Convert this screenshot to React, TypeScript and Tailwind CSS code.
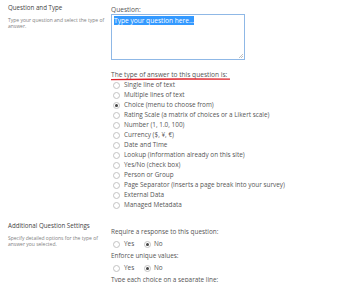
import React from 'react';

const answerTypes = [
  'Single line of text',
  'Multiple lines of text',
  'Choice (menu to choose from)',
  'Rating Scale (a matrix of choices or a Likert scale)',
  'Number (1, 1.0, 100)',
  'Currency ($, ¥, €)',
  'Date and Time',
  'Lookup (information already on this site)',
  'Yes/No (check box)',
  'Person or Group',
  'Page Separator (inserts a page break into your survey)',
  'External Data',
  'Managed Metadata',
];

const Radio: React.FC<{ checked?: boolean }> = ({ checked }) => (
  <span className="flex h-[7px] w-[7px] shrink-0 items-center justify-center rounded-full border border-[#c2c2c2] bg-white">
    {checked && <span className="h-[3px] w-[3px] rounded-full bg-[#444]" />}
  </span>
);

const YesNo: React.FC = () => (
  <div className="flex h-[12px] items-center pl-[2px]">
    <Radio />
    <span className="ml-[4px] w-[20px]">Yes</span>
    <Radio checked />
    <span className="ml-[3px]">No</span>
  </div>
);

export default function App() {
  return (
    <div
      className="h-[282px] w-[359px] overflow-hidden bg-white text-[#555]"
      style={{ fontFamily: '"Open Sans", "Noto Sans", sans-serif' }}
    >
      {/* Question and Type */}
      <div className="flex">
        <div className="w-[111px] shrink-0 pl-[8px] pt-[4px]">
          <div className="text-[6.2px] leading-[8px] text-[#444]">Question and Type</div>
          <div className="mt-[5px] w-[98px] text-[5px] leading-[6px] text-[#808080]">
            Type your question and select the type of answer.
          </div>
        </div>
        <div className="pt-[6px] text-[6.6px]">
          <div className="leading-[8px]">Question:</div>
          <div className="relative h-[46px] w-[134px] border border-[#8fb8e6] px-[2px] pt-[1px]">
            <span className="bg-[#3399ff] leading-[7px] text-white">Type your question here...</span>
            <svg className="absolute bottom-[1px] right-[1px]" width="4" height="4" viewBox="0 0 4 4">
              <path d="M4 0 L0 4 M4 2 L2 4" stroke="#999" strokeWidth="0.6" />
            </svg>
          </div>
          <div className="relative mt-[10px] inline-block leading-[10px]">
            The type of answer to this question is:
            <svg className="absolute left-0 top-[8px]" width="120" height="3" viewBox="0 0 120 3">
              <path d="M0 1.6 Q60 0.6 119 1.2" stroke="#e0242b" strokeWidth="1.3" fill="none" />
            </svg>
          </div>
          <div className="text-[6.4px]">
            {answerTypes.map(t => (
              <div key={t} className="flex h-[10px] items-center pl-[2px]">
                <Radio checked={t === 'Choice (menu to choose from)'} />
                <span className="ml-[4px] whitespace-nowrap">{t}</span>
              </div>
            ))}
          </div>
        </div>
      </div>

      {/* Additional Question Settings */}
      <div className="mt-[10px] flex">
        <div className="w-[111px] shrink-0 pl-[8px] pt-[2px]">
          <div className="text-[6.2px] leading-[8px] text-[#444]">Additional Question Settings</div>
          <div className="mt-[5px] w-[98px] text-[5px] leading-[6px] text-[#808080]">
            Specify detailed options for the type of answer you selected.
          </div>
        </div>
        <div className="pt-[6px] text-[6.4px] leading-[12px]">
          <div>Require a response to this question:</div>
          <YesNo />
          <div>Enforce unique values:</div>
          <YesNo />
          <div>Type each choice on a separate line:</div>
        </div>
      </div>
    </div>
  );
}
